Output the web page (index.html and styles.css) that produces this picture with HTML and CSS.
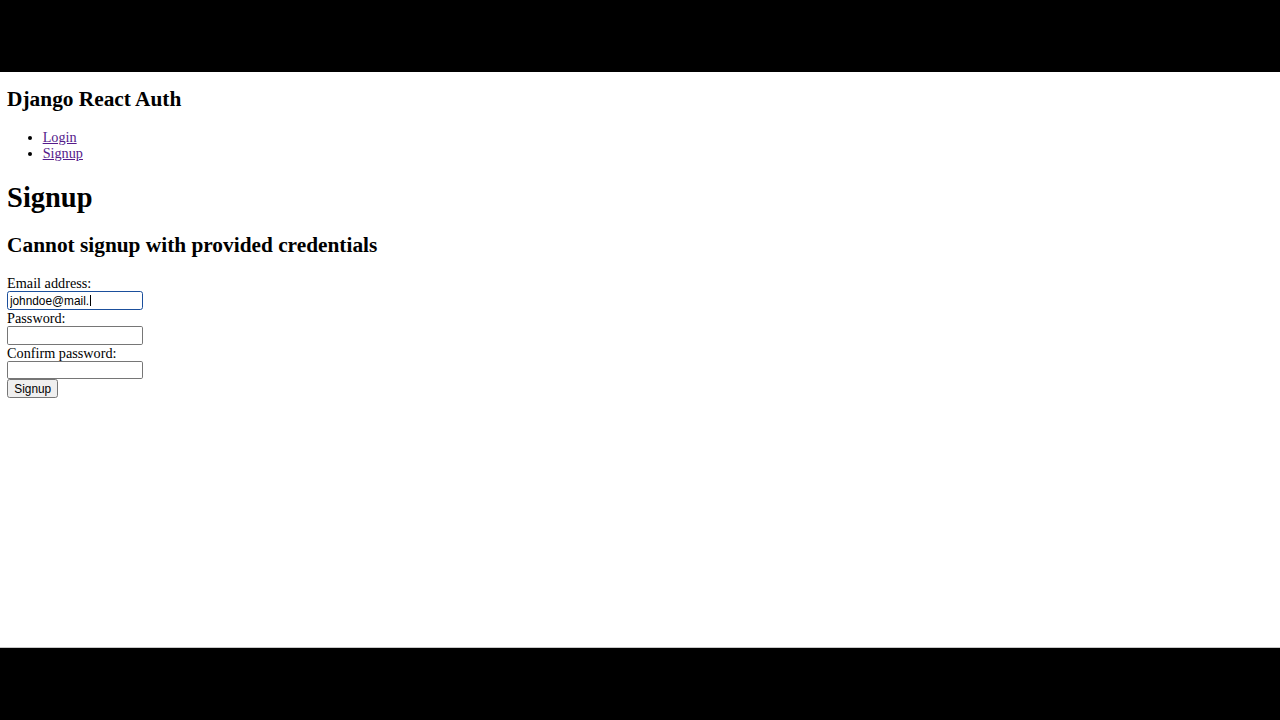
FILE: index.html
```html
<!DOCTYPE html>
<html lang="en">
<head>
    <meta charset="UTF-8">
    <meta name="viewport" content="width=device-width, initial-scale=1.0">
    <title>Django React Auth</title>
    <link rel="stylesheet" href="styles.css">
</head>
<body>
    <div class="bar"></div>
    <div class="screen">
        <div class="page">
            <h2 class="brand">Django React Auth</h2>
            <ul class="nav">
                <li><a href="#login">Login</a></li>
                <li><a href="#signup">Signup</a></li>
            </ul>
            <h1 class="title">Signup</h1>
            <h2 class="error">Cannot signup with provided credentials</h2>
            <form class="signup-form">
                <label for="email">Email address:</label><br>
                <span class="field focused"><input type="email" id="email" value="johndoe@mail."><span class="caret"></span></span><br>
                <label for="password">Password:</label><br>
                <input type="password" id="password"><br>
                <label for="password2">Confirm password:</label><br>
                <input type="password" id="password2"><br>
                <button type="button" class="btn">Signup</button>
            </form>
        </div>
    </div>
    <div class="bar bar-bottom"></div>
</body>
</html>
```

FILE: styles.css
```css
html, body {
    margin: 0;
    padding: 0;
    background: #000;
}

.bar {
    height: 72px;
    background: #000;
}

.bar-bottom {
    border-top: 1px solid #c8c8c8;
    height: 71px;
}

.screen {
    height: 575px;
    background: #fff;
    overflow: hidden;
}

/* the shot was taken at 1440 wide and scaled down */
.page {
    zoom: 0.889;
    padding: 0 8px;
    overflow: hidden;
    font-family: "Liberation Serif", "Times New Roman", serif;
    font-size: 16px;
    color: #000;
}

.brand {
    margin: 17px 0 19px;
}

.nav {
    line-height: 18px;
}

.title {
    margin-top: 24px;
}

.error {
    margin-top: 18.5px;
    margin-bottom: 19px;
}

a {
    color: #551a8b;
}

.signup-form {
    line-height: 18px;
}

.signup-form input {
    font-family: "Liberation Sans", Arial, sans-serif;
    font-size: 13.33px;
    width: 153px;
    height: 21px;
    box-sizing: border-box;
    margin: 0;
    padding: 1px 2px;
    border: 1px solid #767676;
    border-radius: 2px;
    background: #fff;
    vertical-align: bottom;
}

.field {
    position: relative;
    display: inline-block;
    vertical-align: bottom;
}

.field.focused input {
    border: 2px solid #1b4f9c;
    border-radius: 3px;
    outline: none;
    padding: 0 2px;
}

.caret {
    position: absolute;
    left: 93px;
    top: 4px;
    width: 1px;
    height: 13px;
    background: #000;
}

.btn {
    font-family: "Liberation Sans", Arial, sans-serif;
    font-size: 13.33px;
    margin: 0;
    padding: 1px 7px;
    height: 21px;
    border: 1px solid #767676;
    border-radius: 3px;
    background: #efefef;
    color: #000;
}
```
